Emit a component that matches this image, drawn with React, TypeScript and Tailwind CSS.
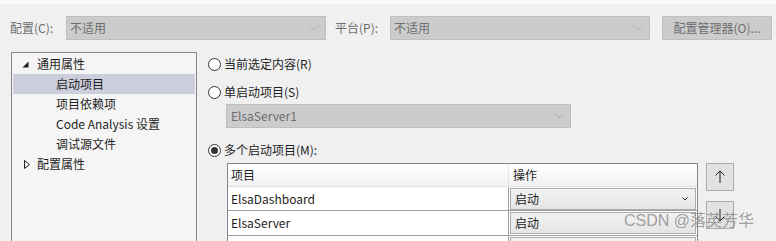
import React from "react";

const font = { fontFamily: '"Noto Sans CJK SC", "Noto Sans", sans-serif' };

function Chevron({ className = "" }: { className?: string }) {
  return (
    <svg width="10" height="6" viewBox="0 0 10 6" className={className}>
      <path d="M0.5 0.5 L5 5 L9.5 0.5" fill="none" stroke="currentColor" strokeWidth="1" />
    </svg>
  );
}

function DisabledCombo({ text, className = "" }: { text: string; className?: string }) {
  return (
    <div
      className={`flex h-[24px] items-center justify-between border border-[#bfbfbf] bg-[#cccccc] pl-[3px] pr-[6px] text-[12px] text-[#6d6d6d] ${className}`}
    >
      <span>{text}</span>
      <Chevron className="text-[#b0b0b0]" />
    </div>
  );
}

function Radio({ label, checked = false }: { label: string; checked?: boolean }) {
  return (
    <div className="flex h-[20px] items-center">
      <div className="flex h-[13px] w-[13px] items-center justify-center rounded-full border border-[#333333] bg-white">
        {checked && <div className="h-[7px] w-[7px] rounded-full bg-[#333333]" />}
      </div>
      <span className="ml-[3px] text-[12px] text-[#1e1e1e]">{label}</span>
    </div>
  );
}

const treeItems = [
  { label: "通用属性", level: 0, icon: "open" },
  { label: "启动项目", level: 1, selected: true },
  { label: "项目依赖项", level: 1 },
  { label: "Code Analysis 设置", level: 1 },
  { label: "调试源文件", level: 1 },
  { label: "配置属性", level: 0, icon: "closed" },
];

export default function App() {
  return (
    <div className="relative h-[241px] w-[776px] overflow-hidden bg-[#f0f0f0]" style={font}>
      <div className="h-[4px] bg-[#f9f9f9]" />

      {/* Top config bar */}
      <div className="flex h-[48px] items-start pt-[12px] text-[12px] text-[#6d6d6d]">
        <span className="ml-[10px] w-[56px] leading-[24px]">配置(C):</span>
        <DisabledCombo text="不适用" className="w-[260px]" />
        <span className="ml-[9px] w-[55px] leading-[24px]">平台(P):</span>
        <DisabledCombo text="不适用" className="w-[260px]" />
        <div className="ml-[12px] flex h-[24px] w-[110px] items-center justify-center border border-[#bfbfbf] bg-[#cccccc]">
          配置管理器(O)...
        </div>
      </div>

      <div className="flex">
        {/* Tree */}
        <div className="ml-[11px] h-[200px] w-[186px] border-l border-r border-t border-[#828790] bg-[#f5f5f5] pt-[1px]">
          {treeItems.map((item) => (
            <div
              key={item.label}
              className={`flex h-[20px] items-center text-[12px] text-[#1e1e1e] ${
                item.selected ? "mx-[1px] bg-[#cccedb]" : ""
              }`}
            >
              {item.level === 0 ? (
                <>
                  <span className="ml-[10px] flex w-[15px] items-center">
                    {item.icon === "open" ? (
                      <svg width="7" height="7" viewBox="0 0 7 7">
                        <path d="M6.5 0.5 L6.5 6.5 L0.5 6.5 Z" fill="#1e1e1e" />
                      </svg>
                    ) : (
                      <svg width="6" height="9" viewBox="0 0 6 9" className="ml-[2px]">
                        <path d="M0.5 0.5 L5.5 4.5 L0.5 8.5 Z" fill="none" stroke="#1e1e1e" strokeWidth="1" />
                      </svg>
                    )}
                  </span>
                  <span>{item.label}</span>
                </>
              ) : (
                <span className={item.selected ? "ml-[43px]" : "ml-[44px]"}>{item.label}</span>
              )}
            </div>
          ))}
        </div>

        {/* Right panel */}
        <div className="ml-[11px] flex flex-col pt-[2px]">
          <Radio label="当前选定内容(R)" />
          <div className="mt-[8px]">
            <Radio label="单启动项目(S)" />
          </div>
          <DisabledCombo text="ElsaServer1" className="ml-[18px] mt-[2px] w-[345px] pl-[4px]" />
          <div className="mt-[12px]">
            <Radio label="多个启动项目(M):" checked />
          </div>

          <div className="ml-[19px] mt-[3px] flex items-start">
            <div className="w-[471px] border border-[#828790] bg-white text-[12px] text-[#1e1e1e]">
              <div className="flex h-[22px] bg-gradient-to-b from-white to-[#f1f1f1]">
                <div className="flex w-[281px] items-center border-r border-[#e5e5e5] pl-[3px]">项目</div>
                <div className="flex flex-1 items-center pl-[4px]">操作</div>
              </div>
              <div className="flex h-[24px] border-t border-[#e0e0e0]">
                <div className="flex w-[281px] items-center border-r border-[#a0a0a0] pl-[3px]">ElsaDashboard</div>
                <div className="flex flex-1 items-center px-[1px]">
                  <div className="flex h-[22px] w-full items-center justify-between border border-[#acacac] bg-gradient-to-b from-[#f2f2f2] to-[#e5e5e5] pl-[4px] pr-[7px]">
                    <span>启动</span>
                    <svg width="6" height="4" viewBox="0 0 6 4">
                      <path d="M0.5 0.5 L3 3 L5.5 0.5" fill="none" stroke="#333" strokeWidth="1" />
                    </svg>
                  </div>
                </div>
              </div>
              <div className="flex h-[25px] border-t border-[#a0a0a0]">
                <div className="flex w-[281px] items-center border-r border-[#a0a0a0] pl-[3px]">ElsaServer</div>
                <div className="flex flex-1 items-center px-[1px]">
                  <div className="flex h-[22px] w-full items-center border border-[#acacac] bg-gradient-to-b from-[#f2f2f2] to-[#e5e5e5] pl-[4px]">
                    启动
                  </div>
                </div>
              </div>
              <div className="flex h-[24px] border-t border-[#a0a0a0]">
                <div className="w-[281px] border-r border-[#a0a0a0]" />
                <div className="flex-1 px-[1px] pt-[1px]">
                  <div className="h-[22px] border border-[#acacac] bg-[#f0f0f0]" />
                </div>
              </div>
            </div>

            <div className="ml-[8px] flex flex-col">
              <div className="flex h-[28px] w-[28px] items-center justify-center border border-[#adadad] bg-[#e1e1e1] text-[#1e1e1e]">
                <svg width="10" height="14" viewBox="0 0 10 14">
                  <path d="M5 13 L5 1 M0.5 5.5 L5 1 L9.5 5.5" fill="none" stroke="currentColor" strokeWidth="1" />
                </svg>
              </div>
              <div className="mt-[10px] flex h-[28px] w-[28px] items-center justify-center border border-[#adadad] bg-[#e1e1e1] text-[#1e1e1e]">
                <svg width="10" height="14" viewBox="0 0 10 14">
                  <path d="M5 1 L5 13 M0.5 8.5 L5 13 L9.5 8.5" fill="none" stroke="currentColor" strokeWidth="1" />
                </svg>
              </div>
            </div>
          </div>
        </div>
      </div>

      {/* Watermark overlay */}
      <div
        className="absolute left-[624px] top-[210px] text-[16px] leading-[22px] text-[#8a8a8a]/80"
        style={{ fontFamily: '"Liberation Sans", "Noto Sans CJK SC", sans-serif' }}
      >
        CSDN @落英芳华
      </div>
    </div>
  );
}
